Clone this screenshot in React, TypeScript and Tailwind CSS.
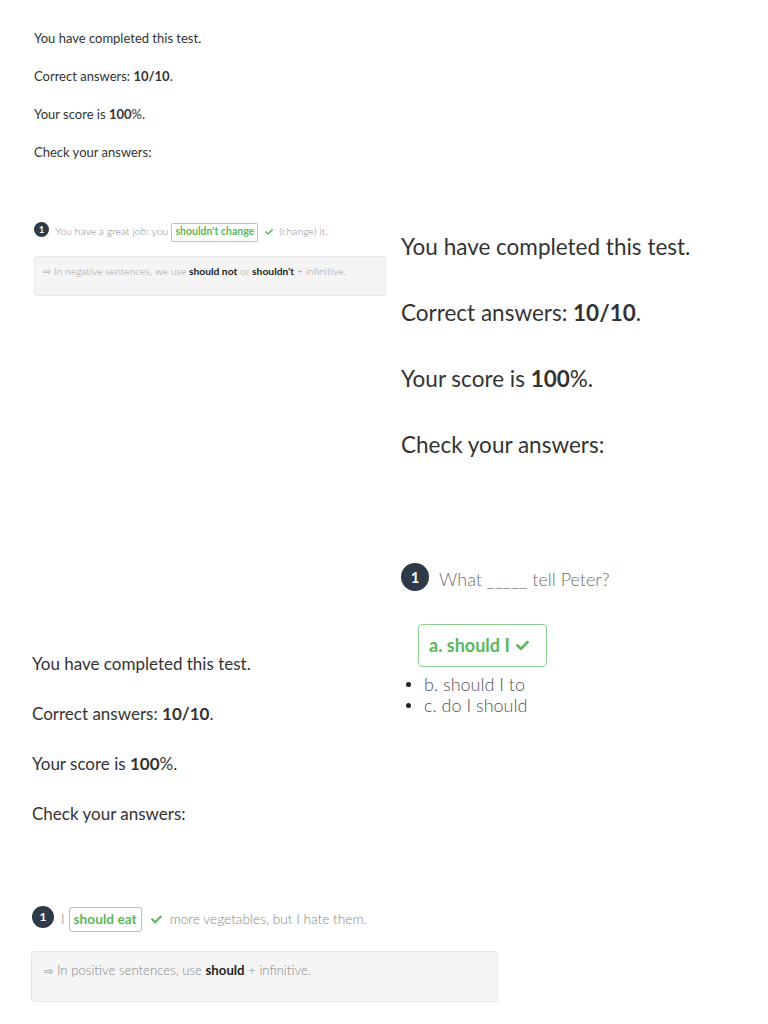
import { FaCheck } from 'react-icons/fa';

const font = { fontFamily: 'Lato, "Open Sans", sans-serif' };

// number badge used by each result block
function Badge({ size, text }: { size: string; text: string }) {
  return (
    <span
      className={`${size} ${text} shrink-0 rounded-full bg-[#2e3a47] text-white font-bold flex items-center justify-center`}
    >
      1
    </span>
  );
}

export default function App() {
  return (
    <div
      style={font}
      className="grid grid-cols-[390px_378px] grid-rows-[300px_1fr] w-[768px] h-[1024px] bg-white text-[#333] overflow-hidden"
    >
      {/* top-left, small capture */}
      <section className="col-start-1 row-start-1 pl-[34px] pt-[30px] flex flex-col">
        <div className="flex flex-col gap-[22px] text-[13px] leading-[16px]">
          <p>You have completed this test.</p>
          <p>
            Correct answers: <b className="font-bold">10/10</b>.
          </p>
          <p>
            Your score is <span className="font-bold">100</span>%.
          </p>
          <p>Check your answers:</p>
        </div>

        <div className="mt-[62px] flex items-center h-[20px] text-[10.5px] text-[#888] font-light">
          <Badge size="w-[15px] h-[15px] -mt-[5px]" text="text-[9px]" />
          <span className="ml-[6px]">You have a great job: you</span>
          <span className="ml-[3px] border border-[#9ed49e] rounded-[2px] px-[3px] h-[19px] flex items-center text-[#5cb85c] font-bold">
            shouldn&apos;t change
          </span>
          <FaCheck className="ml-[7px] text-[#5cb85c] w-[8px] h-[8px]" />
          <span className="ml-[6px]">(change) it.</span>
        </div>

        <div className="mt-[14px] w-[352px] h-[40px] bg-[#f5f5f5] border border-[#e8e8e8] rounded-[3px] pl-[8px] pt-[8px] text-[10.3px] leading-[13px] text-[#999] font-light">
          <span className="mr-[3px]">⇨</span>In negative sentences, we use{' '}
          <b className="font-bold text-[#222]">should not</b> or{' '}
          <b className="font-bold text-[#222]">shouldn&apos;t</b> + infinitive.
        </div>
      </section>

      {/* right, large capture */}
      <section className="col-start-2 row-start-1 row-span-2 pl-[11px] pt-[233px] flex flex-col">
        <div className="flex flex-col gap-[38px] text-[22.5px] leading-[28px]">
          <p>You have completed this test.</p>
          <p>
            Correct answers: <span className="font-bold">10/10</span>.
          </p>
          <p>
            Your score is <span className="font-bold">100</span>%.
          </p>
          <p>Check your answers:</p>
        </div>

        <div className="mt-[106px] flex items-center h-[28px] text-[18px] text-[#6e6e6e] font-light">
          <Badge size="w-[28px] h-[28px] -mt-[4px]" text="text-[15px]" />
          <span className="ml-[10px]">What _____ tell Peter?</span>
        </div>

        <div className="mt-[31px] ml-[17px] w-[129px] h-[43px] border border-[#8fcf8f] rounded-[4px] flex items-center pl-[10px] gap-[6px] text-[18px] font-bold text-[#5cb85c]">
          a. should I
          <FaCheck className="w-[13px] h-[13px]" />
        </div>

        <ul className="mt-[7px] text-[18px] leading-[21px] text-[#555] font-light">
          <li className="flex items-center">
            <span className="w-[5px] h-[5px] rounded-full bg-[#222] ml-[5px] mr-[13px]" />
            b. should I to
          </li>
          <li className="flex items-center">
            <span className="w-[5px] h-[5px] rounded-full bg-[#222] ml-[5px] mr-[13px]" />
            c. do I should
          </li>
        </ul>
      </section>

      {/* bottom-left, medium capture */}
      <section className="col-start-1 row-start-2 pl-[32px] pt-[353px] flex flex-col">
        <div className="flex flex-col gap-[28px] text-[17px] leading-[22px]">
          <p>You have completed this test.</p>
          <p>
            Correct answers: <span className="font-bold">10/10</span>.
          </p>
          <p>
            Your score is <span className="font-bold">100</span>%.
          </p>
          <p>Check your answers:</p>
        </div>

        <div className="mt-[82px] flex items-center h-[25px] text-[13.7px] text-[#888] font-light">
          <Badge size="w-[22px] h-[22px] -mt-[6px]" text="text-[12px]" />
          <span className="ml-[7px]">I</span>
          <span className="ml-[4px] border border-[#9ed49e] rounded-[3px] px-[4px] h-[25px] flex items-center text-[#5cb85c] font-bold">
            should eat
          </span>
          <FaCheck className="ml-[9px] text-[#5cb85c] w-[11px] h-[11px]" />
          <span className="ml-[8px]">more vegetables, but I hate them.</span>
        </div>

        <div className="mt-[19px] -ml-[1px] w-[467px] h-[51px] bg-[#f5f5f5] border border-[#e6e6e6] rounded-[3px] pl-[12px] pt-[9px] text-[13.2px] leading-[18px] text-[#888] font-light">
          <span className="mr-[4px] text-[11px]">⇨</span>In positive sentences, use{' '}
          <b className="font-bold text-[#222]">should</b> + infinitive.
        </div>
      </section>
    </div>
  );
}
